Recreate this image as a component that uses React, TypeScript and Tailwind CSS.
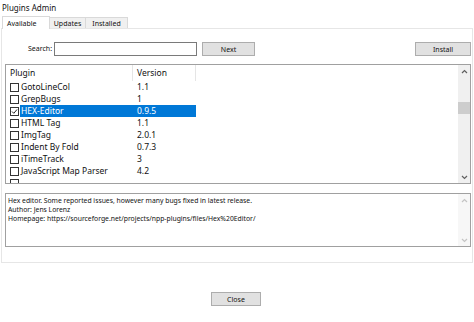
import React from "react";

const plugins = [
  { name: "GotoLineCol", version: "1.1", checked: false },
  { name: "GrepBugs", version: "1", checked: false },
  { name: "HEX-Editor", version: "0.9.5", checked: true },
  { name: "HTML Tag", version: "1.1", checked: false },
  { name: "ImgTag", version: "2.0.1", checked: false },
  { name: "Indent By Fold", version: "0.7.3", checked: false },
  { name: "iTimeTrack", version: "3", checked: false },
  { name: "JavaScript Map Parser", version: "4.2", checked: false },
];

const Chevron = ({ up, light }: { up?: boolean; light?: boolean }) => (
  <svg width="7" height="5" viewBox="0 0 7 5">
    <path
      d={up ? "M1 4 L3.5 1.5 L6 4" : "M1 1 L3.5 3.5 L6 1"}
      fill="none"
      stroke={light ? "#c4c4c4" : "#606060"}
      strokeWidth="1.2"
    />
  </svg>
);

const Checkbox = ({ checked }: { checked: boolean }) => (
  <div className="w-[9px] h-[9px] border border-[#333] bg-white flex items-center justify-center shrink-0">
    {checked && (
      <svg width="7" height="7" viewBox="0 0 7 7">
        <path d="M1 3.5 L2.8 5.3 L6 1.5" fill="none" stroke="#222" strokeWidth="1" />
      </svg>
    )}
  </div>
);

const Button = ({ label, className }: { label: string; className: string }) => (
  <button className={`h-[14px] bg-[#e1e1e1] border border-[#adadad] text-[7px] text-[#111] leading-none ${className}`}>
    {label}
  </button>
);

const App = () => {
  return (
    <div className="w-[474px] h-[322px] bg-white text-[#111] overflow-hidden font-['Noto_Sans','Liberation_Sans',sans-serif]">
      {/* title */}
      <div className="h-[16px] pl-[2px] pt-[2px] text-[8px] leading-[12px]">Plugins Admin</div>

      {/* tabs */}
      <div className="flex items-end h-[12px] pl-[2px] text-[7px] leading-none">
        <div className="h-[13px] w-[48px] bg-white border border-b-0 border-[#d9d9d9] flex items-center pl-[4px] relative top-[1px]">
          Available
        </div>
        <div className="h-[11px] w-[36px] bg-[#f0f0f0] border border-l-0 border-b-0 border-[#d9d9d9] flex items-center justify-center">
          Updates
        </div>
        <div className="h-[11px] w-[42px] bg-[#f0f0f0] border border-l-0 border-b-0 border-[#d9d9d9] flex items-center justify-center">
          Installed
        </div>
      </div>

      {/* tab page */}
      <div className="ml-[1px] w-[472px] h-[235px] border border-[#e6e6e6] flex flex-col pl-[3px] pr-[1px]">
        <div className="flex items-center mt-[13px] h-[14px] text-[7px]">
          <span className="ml-[23px] w-[26px]">Search:</span>
          <div className="w-[143px] h-[14px] border border-[#7a7a7a] bg-white" />
          <Button label="Next" className="ml-[5px] w-[53px]" />
          <div className="flex-1" />
          <Button label="Install" className="w-[56px]" />
        </div>

        {/* plugin list */}
        <div className="mt-[8px] h-[120px] border border-[#a0a0a0] flex">
          <div className="flex-1 overflow-hidden text-[8.5px] leading-none">
            <div className="flex h-[16px] items-center">
              <div className="w-[127px] pl-[4px] border-r border-[#e5e5e5] h-full flex items-center">Plugin</div>
              <div className="w-[63px] pl-[4px] border-r border-[#e5e5e5] h-full flex items-center">Version</div>
            </div>
            {plugins.map((p) => (
              <div key={p.name} className="flex h-[12px] items-center">
                <div className="pl-[4px] pr-[1px] flex items-center">
                  <Checkbox checked={p.checked} />
                </div>
                <div
                  className={`flex h-full items-center w-[176px] ${p.checked ? "bg-[#0078d7] text-white" : ""}`}
                >
                  <span className="w-[117px] pl-[1px]">{p.name}</span>
                  <span>{p.version}</span>
                </div>
              </div>
            ))}
            <div className="flex h-[12px] items-center">
              <div className="pl-[4px] flex items-center">
                <Checkbox checked={false} />
              </div>
            </div>
          </div>
          <div className="w-[12px] bg-[#f0f0f0] flex flex-col items-center">
            <div className="h-[12px] flex items-center">
              <Chevron up />
            </div>
            <div className="mt-[25px] w-full h-[12px] bg-[#cdcdcd]" />
            <div className="flex-1" />
            <div className="h-[12px] flex items-center">
              <Chevron />
            </div>
          </div>
        </div>

        {/* description */}
        <div className="mt-[9px] h-[54px] border border-[#a0a0a0] flex">
          <div className="flex-1 pl-[2px] pt-[2px] text-[6.8px] leading-[9px]">
            <div>Hex editor. Some reported issues, however many bugs fixed in latest release.</div>
            <div>Author: Jens Lorenz</div>
            <div>Homepage: https://sourceforge.net/projects/npp-plugins/files/Hex%20Editor/</div>
          </div>
          <div className="w-[12px] bg-[#f7f7f7] flex flex-col items-center justify-between">
            <div className="h-[12px] flex items-center">
              <Chevron up light />
            </div>
            <div className="h-[12px] flex items-center">
              <Chevron light />
            </div>
          </div>
        </div>
      </div>

      {/* footer */}
      <div className="flex justify-center mt-[29px] pr-[2px]">
        <Button label="Close" className="w-[50px]" />
      </div>
    </div>
  );
};

export default App;
